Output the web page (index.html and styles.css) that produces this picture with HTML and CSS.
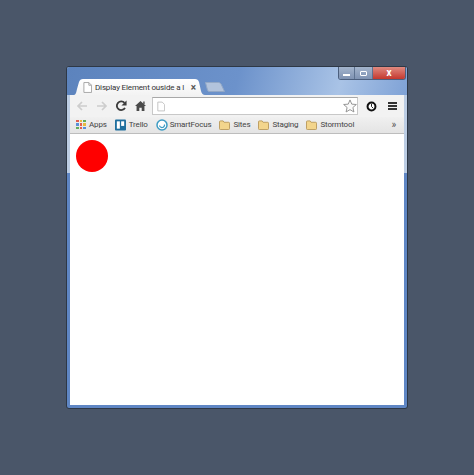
FILE: index.html
```html
<!DOCTYPE html>
<html lang="en">
<head>
    <meta charset="UTF-8">
    <meta name="viewport" content="width=device-width, initial-scale=1.0">
    <title>Display Element outside a Parent</title>
    <link rel="stylesheet" href="styles.css">
</head>
<body>
    <div class="window">
        <!-- Title strip with tabs and window buttons -->
        <div class="tab-strip">
            <div class="tab">
                <svg class="page-icon" width="9" height="11" viewBox="0 0 10 12"><path d="M1 .5h5.500L9.500 3.500V11.500H1z" fill="#fff" stroke="#a0a0a0"/><path d="M6.500 .5V3.500H9.500" fill="none" stroke="#a0a0a0"/></svg>
                <span class="tab-title">Display Element ouside a l</span>
                <span class="tab-close">×</span>
            </div>
            <svg class="new-tab" width="20" height="10" viewBox="0 0 20 10"><path d="M.5 .5H13.500Q15 .5 16 2L19.500 9.500H4Q3 9.500 2.500 8z" fill="#b2c3dc" stroke="#93a8c6"/></svg>
            <div class="win-buttons">
                <span class="win-btn"><i class="min-glyph"></i></span>
                <span class="win-btn max-btn"><i class="max-glyph"></i></span>
                <span class="win-btn close-btn">x</span>
            </div>
        </div>

        <!-- Navigation toolbar -->
        <div class="toolbar">
            <svg class="nav-arrow" width="20" height="10" viewBox="0 0 20 10"><path d="M15 5H6M10 1L6 5L10 9" fill="none" stroke="#cdcdcd" stroke-width="1.700"/></svg>
            <svg class="nav-arrow" width="20" height="10" viewBox="0 0 20 10"><path d="M5 5H14M10 1L14 5L10 9" fill="none" stroke="#cdcdcd" stroke-width="1.700"/></svg>
            <svg class="reload-icon" width="12" height="12" viewBox="0 0 13 13"><path d="M10.800 8.500A4.700 4.700 0 1 1 10.300 3.200" fill="none" stroke="#3c3c3c" stroke-width="2"/><path d="M12.500 .5V6H7z" fill="#3c3c3c"/></svg>
            <svg class="home-icon" width="11" height="12" viewBox="0 0 12 12"><path d="M6 .5L12 6H10.300V11.500H7.300V8H4.700V11.500H1.700V6H0z" fill="#4a4a4a"/><path d="M9 1H10.500V4H9z" fill="#4a4a4a"/></svg>
            <div class="omnibox">
                <svg width="8" height="11" viewBox="0 0 10 12"><path d="M1 .5h5.500L9.500 3.500V11.500H1z" fill="#fff" stroke="#b8b8b8"/></svg>
                <svg width="14" height="14" viewBox="0 0 15 15"><path d="M7.500 1L9.400 5.500L14.300 5.900L10.600 9.100L11.700 13.900L7.500 11.400L3.300 13.900L4.400 9.100L.7 5.900L5.600 5.500z" fill="#fafafa" stroke="#8e8e8e"/></svg>
            </div>
            <svg class="ext-icon" width="11" height="11" viewBox="0 0 12 12"><circle cx="6" cy="6" r="4.300" fill="#fff" stroke="#111" stroke-width="2.200"/><path d="M6 3V6L8 8" fill="none" stroke="#111"/></svg>
            <div class="menu-icon"><i></i><i></i><i></i></div>
        </div>

        <!-- Bookmarks bar -->
        <div class="bookmarks">
            <span class="bookmark">
                <span class="apps-grid">
                    <i class="dot-r"></i><i class="dot-y"></i><i class="dot-g"></i>
                    <i class="dot-b"></i><i class="dot-r"></i><i class="dot-y"></i>
                    <i class="dot-g"></i><i class="dot-r"></i><i class="dot-b"></i>
                </span>Apps
            </span>
            <span class="bookmark">
                <svg width="11" height="12" viewBox="0 0 12 12"><rect width="12" height="12" rx="1" fill="#1f6f9e"/><rect x="2" y="2" width="3.300" height="8" fill="#fff"/><rect x="6.700" y="2" width="3.300" height="5" fill="#fff"/></svg>Trello
            </span>
            <span class="bookmark smartfocus">
                <svg width="12" height="12" viewBox="0 0 12 12"><circle cx="6" cy="6" r="5" fill="#fff" stroke="#3d9cc4" stroke-width="1.500"/><path d="M3.500 6.500A2.500 2.500 0 0 0 8.500 5.500" fill="none" stroke="#3d9cc4" stroke-width="1.200"/></svg>SmartFocus
            </span>
            <span class="bookmark"><svg width="11" height="10" viewBox="0 0 12 11"><path d="M.5 9.500V2Q.5 1 1.500 1H4.500L5.500 2.500H10.500Q11.500 2.500 11.500 3.500V9.500Q11.500 10.500 10.500 10.500H1.500Q.5 10.500 .5 9.500z" fill="#f3d58c" stroke="#b9995a"/></svg>Sites</span>
            <span class="bookmark"><svg width="11" height="10" viewBox="0 0 12 11"><path d="M.5 9.500V2Q.5 1 1.500 1H4.500L5.500 2.500H10.500Q11.500 2.500 11.500 3.500V9.500Q11.500 10.500 10.500 10.500H1.500Q.5 10.500 .5 9.500z" fill="#f3d58c" stroke="#b9995a"/></svg>Staging</span>
            <span class="bookmark"><svg width="11" height="10" viewBox="0 0 12 11"><path d="M.5 9.500V2Q.5 1 1.500 1H4.500L5.500 2.500H10.500Q11.500 2.500 11.500 3.500V9.500Q11.500 10.500 10.500 10.500H1.500Q.5 10.500 .5 9.500z" fill="#f3d58c" stroke="#b9995a"/></svg>Stormtool</span>
            <span class="more">»</span>
        </div>

        <!-- Page content -->
        <div class="content">
            <div class="red-circle"></div>
        </div>
    </div>
</body>
</html>
```

FILE: styles.css
```css
html, body {
    margin: 0;
    height: 100%;
}
body {
    background-color: #4a5669;
    font-family: Roboto, "Liberation Sans", Arial, sans-serif;
    padding: 66px;
    box-sizing: border-box;
    overflow: hidden;
}
.window {
    width: 342px;
    height: 343px;
    box-sizing: border-box;
    padding: 0 3px 3px 3px;
    display: flex;
    flex-direction: column;
    border: 1px solid #2e3846;
    border-radius: 3px;
    background: linear-gradient(to bottom, #bccde4 106px, #5f86c4 106px);
}
.tab-strip {
    height: 28px;
    display: flex;
    align-items: flex-end;
    flex-shrink: 0;
    margin: 0 -3px;
    padding-left: 6px;
    border-radius: 2px 2px 0 0;
    background: linear-gradient(105deg, #5c83bd 0%, #6c92cb 50%, #a9c3e6 80%, #7fa2d6 100%);
}
.tab {
    width: 132px;
    height: 16px;
    display: flex;
    align-items: center;
    box-sizing: border-box;
    padding: 0 9px 0 10px;
    background: linear-gradient(to bottom, #ffffff, #f3f3f3);
    clip-path: path("M0 16 C3 16 3 14 4 10 L6 3 Q7 0 10 0 H122 Q125 0 126 3 L128 12 Q129 16 132 16 Z");
    font-size: 8px;
    letter-spacing: -0.150px;
    color: #333;
}
.page-icon {
    margin-right: 3px;
    flex-shrink: 0;
}
.tab-title {
    flex: 1;
    white-space: nowrap;
}
.tab-close {
    font-size: 10px;
    font-weight: bold;
    color: #555;
}
.new-tab {
    margin-bottom: 3px;
}
.win-buttons {
    display: flex;
    align-self: flex-start;
    margin-left: auto;
    margin-right: 1px;
    height: 12px;
    border: 1px solid #4c5f7d;
    border-top: none;
    border-radius: 0 0 3px 3px;
    overflow: hidden;
}
.win-btn {
    width: 15px;
    display: flex;
    align-items: center;
    justify-content: center;
    background: linear-gradient(to bottom, #a3b4cc, #7f93b3);
    border-right: 1px solid #5e7391;
}
.max-btn {
    width: 17px;
}
.close-btn {
    width: 32px;
    border-right: none;
    background: linear-gradient(to bottom, #e08a80, #c4382e);
    color: #fff;
    font-size: 10px;
    font-weight: bold;
    line-height: 10px;
}
.min-glyph {
    display: block;
    width: 7px;
    height: 2px;
    margin-top: 4px;
    background-color: #fff;
}
.max-glyph {
    display: block;
    width: 5px;
    height: 3px;
    border: 1px solid #fff;
    border-radius: 1px;
}
.toolbar {
    height: 22px;
    display: flex;
    align-items: center;
    flex-shrink: 0;
    padding-left: 2px;
    background-color: #f2f2f2;
}
.reload-icon {
    margin-left: 3px;
}
.home-icon {
    margin-left: 8px;
}
.omnibox {
    width: 206px;
    height: 18px;
    margin-left: 6px;
    padding: 0 0 0 4px;
    display: flex;
    align-items: center;
    justify-content: space-between;
    box-sizing: border-box;
    background-color: #fff;
    border: 1px solid #c8c8c8;
    border-top-color: #a8a8a8;
}
.ext-icon {
    margin-left: 8px;
}
.menu-icon {
    margin-left: 11px;
    width: 9px;
    display: flex;
    flex-direction: column;
    gap: 1px;
}
.menu-icon i {
    display: block;
    height: 2px;
    background-color: #333;
}
.bookmarks {
    height: 17px;
    display: flex;
    align-items: center;
    flex-shrink: 0;
    padding: 0 6px 1px 6px;
    box-sizing: border-box;
    background: linear-gradient(to bottom, #f0f0f0, #e4e4e4);
    border-bottom: 1px solid #bdbdbd;
    font-size: 8px;
    letter-spacing: -0.150px;
    color: #444;
}
.bookmark {
    display: flex;
    align-items: center;
    gap: 3px;
    margin-right: 8px;
    white-space: nowrap;
}
.smartfocus {
    gap: 2px;
}
.apps-grid {
    width: 10px;
    height: 10px;
    display: grid;
    grid-template-columns: repeat(3, 2.500px);
    grid-auto-rows: 2.500px;
    gap: 1px;
}
.apps-grid i {
    display: block;
}
.dot-r { background-color: #e0604f; }
.dot-y { background-color: #e8b93e; }
.dot-g { background-color: #63ad5b; }
.dot-b { background-color: #5a8fd8; }
.more {
    margin-left: auto;
    margin-right: 2px;
    font-size: 10px;
    color: #555;
}
.content {
    flex: 1;
    background-color: #fff;
    padding: 6px;
}
.red-circle {
    width: 32px;
    height: 32px;
    border-radius: 50%;
    background-color: #ff0000;
}
```
